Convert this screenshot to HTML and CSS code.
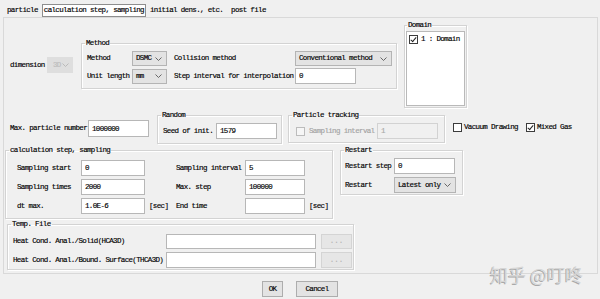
FILE: index.html
```html
<!DOCTYPE html>
<html lang="en">
<head>
  <meta charset="UTF-8" />
  <title>calculation step, sampling</title>
  <link rel="stylesheet" href="styles.css">
</head>
<body>

  <div class="tabs">
    <div class="tab">particle</div>
    <div class="tab active">calculation step, sampling</div>
    <div class="tab">initial dens., etc.</div>
    <div class="tab">post file</div>
  </div>

  <div class="panel">

    <div class="row row-a">
      <div class="dim">
        <span class="dim-label">dimension</span>
        <div class="combo combo-dim off"><span>3D</span><svg class="chev" viewBox="0 0 7 4"><polyline points="0.5,0.5 3.5,3.5 6.5,0.5" /></svg></div>
      </div>

      <fieldset class="group method">
        <legend>Method</legend>
        <div class="method-grid">
          <span>Method</span>
          <div class="combo"><span>DSMC</span><svg class="chev" viewBox="0 0 7 4"><polyline points="0.5,0.5 3.5,3.5 6.5,0.5" /></svg></div>
          <span class="pad">Collision method</span>
          <div class="combo"><span>Conventional method</span><svg class="chev" viewBox="0 0 7 4"><polyline points="0.5,0.5 3.5,3.5 6.5,0.5" /></svg></div>
          <span>Unit length</span>
          <div class="combo"><span>mm</span><svg class="chev" viewBox="0 0 7 4"><polyline points="0.5,0.5 3.5,3.5 6.5,0.5" /></svg></div>
          <span class="pad">Step interval for interpolation</span>
          <input class="field w61" type="text" value="0" readonly>
        </div>
      </fieldset>

      <fieldset class="group domain">
        <legend>Domain</legend>
        <div class="domain-list">
          <div class="check-row"><span class="box on"></span><span>1 : Domain</span></div>
        </div>
      </fieldset>
    </div>

    <div class="row row-b">
      <div class="maxp">
        <span class="maxp-label">Max. particle number</span>
        <input class="field w61 h17" type="text" value="1000000" readonly>
      </div>

      <fieldset class="group random">
        <legend>Random</legend>
        <div class="inline">
          <span class="seed-label">Seed of init.</span>
          <input class="field w61" type="text" value="1579" readonly>
        </div>
      </fieldset>

      <fieldset class="group tracking">
        <legend>Particle tracking</legend>
        <div class="inline">
          <span class="box dis"></span>
          <span class="track-label">Sampling interval</span>
          <input class="field w61 dis" type="text" value="1" readonly>
        </div>
      </fieldset>

      <div class="check-row opt"><span class="box"></span><span>Vacuum Drawing</span></div>
      <div class="check-row opt"><span class="box on"></span><span>Mixed Gas</span></div>
    </div>

    <div class="row row-c">
      <fieldset class="group calc">
        <legend>calculation step, sampling</legend>
        <div class="calc-grid">
          <span>Sampling start</span>
          <input class="field" type="text" value="0" readonly>
          <span></span>
          <span>Sampling interval</span>
          <input class="field" type="text" value="5" readonly>
          <span></span>

          <span>Sampling times</span>
          <input class="field" type="text" value="2000" readonly>
          <span></span>
          <span>Max. step</span>
          <input class="field" type="text" value="100000" readonly>
          <span></span>

          <span>dt max.</span>
          <input class="field" type="text" value="1.0E-6" readonly>
          <span class="unit">[sec]</span>
          <span>End time</span>
          <input class="field" type="text" value="" readonly>
          <span class="unit">[sec]</span>
        </div>
      </fieldset>

      <fieldset class="group restart">
        <legend>Restart</legend>
        <div class="restart-grid">
          <span>Restart step</span>
          <input class="field" type="text" value="0" readonly>
          <span>Restart</span>
          <div class="combo"><span>Latest only</span><svg class="chev" viewBox="0 0 7 4"><polyline points="0.5,0.5 3.5,3.5 6.5,0.5" /></svg></div>
        </div>
      </fieldset>
    </div>

    <div class="row row-d">
      <fieldset class="group temp">
        <legend>Temp. File</legend>
        <div class="temp-grid">
          <span>Heat Cond. Anal./Solid(HCA3D)</span>
          <input class="field" type="text" value="" readonly>
          <button class="dots" disabled>...</button>
          <span>Heat Cond. Anal./Bound. Surface(THCA3D)</span>
          <input class="field" type="text" value="" readonly>
          <button class="dots" disabled>...</button>
        </div>
      </fieldset>
    </div>

  </div>

  <div class="actions">
    <button class="btn ok">OK</button>
    <button class="btn cancel">Cancel</button>
  </div>

  <div class="watermark">知乎 @叮咚</div>

</body>
</html>
```

FILE: styles.css
```css
* {
  box-sizing: border-box;
}

body {
  margin: 0;
  width: 600px;
  height: 299px;
  overflow: hidden;
  position: relative;
  background: #f0f0f0;
  color: #000;
  font-family: "Liberation Mono", monospace;
  font-size: 7.5px;
  letter-spacing: -0.65px;
  line-height: 9px;
  white-space: nowrap;
  -webkit-text-stroke: 0.15px currentColor;
}

/* tabs */

.tabs {
  display: flex;
  height: 17px;
  padding: 4px 0 0 3px;
}

.tab {
  height: 13px;
  line-height: 13px;
  padding: 0 4px;
}

.tab.active {
  position: relative;
  z-index: 1;
  padding: 0 1px;
  line-height: 11px;
  background: #fff;
  border: 1px solid #8e8e8e;
}

.panel {
  margin-left: 3px;
  width: 595px;
  height: 257px;
  border: 1px solid #d9d9d9;
}

.row {
  display: flex;
  align-items: flex-start;
}

/* group boxes */

.group {
  margin: 0;
  padding: 0 0 0 3px;
  border: 1px solid #d3d3d3;
  box-shadow: 1px 1px 0 #fff, inset 1px 1px 0 #fff;
  min-width: 0;
}

.group legend {
  padding: 0 1px;
  line-height: 9px;
}

/* row a */

.row-a {
  height: 90px;
}

.dim {
  display: flex;
  align-items: center;
  margin: 39px 0 0 6px;
}

.dim-label {
  width: 37px;
}

.combo {
  display: flex;
  align-items: center;
  justify-content: space-between;
  height: 15px;
  padding: 0 4px 0 3px;
  background: #e3e3e3;
  border: 1px solid #b4b4b4;
}

.combo-dim {
  width: 26px;
  height: 16px;
  padding: 0 3px 0 5px;
}

.combo.off {
  background: #dedede;
  border-color: #dedede;
  color: #bdbdbd;
}

.chev {
  width: 7px;
  height: 4px;
  fill: none;
  stroke: #5a5a5a;
  stroke-width: 0.9;
}

.combo.off .chev {
  stroke: #b5b5b5;
}

.method {
  margin: 21px 0 0 8px;
  width: 316px;
  height: 50px;
}

.method-grid {
  display: grid;
  grid-template-columns: 45px 35px 128px 97px;
  grid-template-rows: 15px 16px;
  row-gap: 2px;
  align-items: center;
  margin: 3px 0 0 2px;
}

.method-grid .pad {
  padding-left: 7px;
}

.field {
  display: block;
  width: 64px;
  height: 16px;
  margin: 0;
  padding: 0 3px;
  font: inherit;
  letter-spacing: inherit;
  color: #000;
  background: #fff;
  border: 1px solid #b7b7b7;
  outline: none;
}

.field.w61 {
  width: 61px;
}

.field.h17 {
  height: 17px;
}

.field.dis {
  background: #f0f0f0;
  border-color: #d2d2d2;
  color: #a8a8a8;
}

.domain {
  margin: 3px 0 0 7px;
  width: 63px;
  height: 87px;
  padding: 0 1px;
}

.domain legend {
  margin-left: 1px;
}

.domain-list {
  width: 59px;
  height: 75px;
  margin-top: 1px;
  padding: 3px 0 0 2px;
  background: #fff;
  border: 1px solid #b9b9b9;
}

.check-row {
  display: flex;
  align-items: center;
  gap: 3px;
}

.box {
  position: relative;
  flex: none;
  width: 9px;
  height: 9px;
  background: #fff;
  border: 1px solid #3c3c3c;
}

.box.on::after {
  content: "";
  position: absolute;
  left: 2px;
  top: 0;
  width: 2px;
  height: 5px;
  border: solid #222;
  border-width: 0 1px 1px 0;
  transform: rotate(40deg);
}

.box.dis {
  background: #f6f6f6;
  border-color: #bcbcbc;
}

/* row b */

.row-b {
  margin-top: 3px;
}

.maxp {
  display: flex;
  align-items: center;
  margin: 9px 0 0 6px;
}

.maxp-label {
  width: 78px;
}

.inline {
  display: flex;
  align-items: center;
  margin: 3px 0 0 2px;
}

.random {
  margin-left: 8px;
  width: 125px;
  height: 33px;
}

.seed-label {
  width: 53px;
}

.tracking {
  margin-left: 6px;
  width: 157px;
  height: 32px;
}

.tracking .inline {
  margin-left: 4px;
}

.track-label {
  width: 72px;
  padding-left: 4px;
  color: #a3a3a3;
}

.opt {
  margin: 12px 0 0 8px;
  gap: 2px;
}

/* row c */

.row-c {
  margin-top: 2px;
}

.calc {
  margin-left: 1px;
  width: 328px;
  height: 73px;
}

.calc-grid {
  display: grid;
  grid-template-columns: 64px 64px 31px 69px 60px 20px;
  grid-template-rows: repeat(3, 16px);
  row-gap: 3px;
  align-items: center;
  margin: 5px 0 0 8px;
}

.calc-grid .field {
  width: 100%;
}

.unit {
  padding-left: 4px;
}

.restart {
  margin-left: 7px;
  width: 123px;
  height: 49px;
}

.restart-grid {
  display: grid;
  grid-template-columns: 49px 62px;
  grid-template-rows: 16px 16px;
  row-gap: 3px;
  align-items: center;
  margin: 3px 0 0 1px;
}

.restart-grid .field {
  width: 61px;
}

.restart-grid .combo {
  height: 16px;
}

/* row d */

.row-d {
  margin-top: 1px;
}

.temp {
  margin-left: 3px;
  width: 347px;
  height: 50px;
}

.temp-grid {
  display: grid;
  grid-template-columns: 153px 150px 36px;
  grid-template-rows: 15px 16px;
  row-gap: 3px;
  align-items: center;
  margin: 5px 0 0 2px;
}

.temp-grid .field {
  width: 150px;
  height: 100%;
}

.dots {
  width: 31px;
  height: 100%;
  margin-left: 5px;
  padding: 0;
  font: inherit;
  letter-spacing: 0;
  color: #b3b3b3;
  background: #e6e6e6;
  border: 1px solid #d4d4d4;
}

/* buttons */

.actions {
  display: flex;
  justify-content: center;
  gap: 13px;
  margin-top: 7px;
}

.btn {
  height: 16px;
  padding: 0;
  font: inherit;
  letter-spacing: inherit;
  color: #000;
  background: #e3e3e3;
  border: 1px solid #adadad;
}

.btn.ok {
  width: 21px;
}

.btn.cancel {
  width: 42px;
}

.watermark {
  position: absolute;
  left: 490px;
  top: 264px;
  font-family: "Noto Sans CJK SC", sans-serif;
  font-size: 18px;
  line-height: 20px;
  letter-spacing: 0;
  color: #d6d6d6;
  text-shadow: -1px 1px 0 #a9a9a9;
  -webkit-text-stroke: 0;
}
```
